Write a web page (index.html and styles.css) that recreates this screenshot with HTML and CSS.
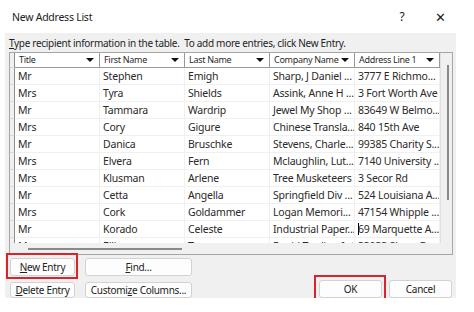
FILE: index.html
```html
<!DOCTYPE html>
<html lang="en">
<head>
    <meta charset="UTF-8">
    <title>New Address List</title>
    <link rel="stylesheet" href="styles.css">
</head>
<body>
    <div class="titlebar">
        <span class="title">New Address List</span>
        <span class="help">?</span>
        <span class="close">&#x2715;</span>
    </div>
    <div class="dialog">
        <div class="hint"><u>T</u>ype recipient information in the table.&nbsp; To add more entries, click New Entry.</div>
        <div class="grid">
            <div class="grid-main">
                <div class="cells">
                    <div class="row head">
                        <div class="rh"></div>
                        <div class="hc">Title<i></i></div>
                        <div class="hc">First Name<i></i></div>
                        <div class="hc">Last Name<i></i></div>
                        <div class="hc">Company Name<i></i></div>
                        <div class="hc">Address Line 1<i></i></div>
                    </div>
                    <div class="row"><div class="rh"></div><div class="c">Mr</div><div class="c">Stephen</div><div class="c">Emigh</div><div class="c">Sharp, J Daniel ...</div><div class="c">3777 E Richmo...</div></div>
                    <div class="row"><div class="rh"></div><div class="c">Mrs</div><div class="c">Tyra</div><div class="c">Shields</div><div class="c">Assink, Anne H ...</div><div class="c">3 Fort Worth Ave</div></div>
                    <div class="row"><div class="rh"></div><div class="c">Mr</div><div class="c">Tammara</div><div class="c">Wardrip</div><div class="c">Jewel My Shop ...</div><div class="c">83649 W Belmo...</div></div>
                    <div class="row"><div class="rh"></div><div class="c">Mrs</div><div class="c">Cory</div><div class="c">Gigure</div><div class="c">Chinese Transla...</div><div class="c">840 15th Ave</div></div>
                    <div class="row"><div class="rh"></div><div class="c">Mr</div><div class="c">Danica</div><div class="c">Bruschke</div><div class="c">Stevens, Charle...</div><div class="c">99385 Charity S...</div></div>
                    <div class="row"><div class="rh"></div><div class="c">Mrs</div><div class="c">Elvera</div><div class="c">Fern</div><div class="c">Mclaughlin, Lut...</div><div class="c">7140 University ...</div></div>
                    <div class="row"><div class="rh"></div><div class="c">Mrs</div><div class="c">Klusman</div><div class="c">Arlene</div><div class="c">Tree Musketeers</div><div class="c">3 Secor Rd</div></div>
                    <div class="row"><div class="rh"></div><div class="c">Mr</div><div class="c">Cetta</div><div class="c">Angella</div><div class="c">Springfield Div ...</div><div class="c">524 Louisiana A...</div></div>
                    <div class="row"><div class="rh"></div><div class="c">Mrs</div><div class="c">Cork</div><div class="c">Goldammer</div><div class="c">Logan Memori...</div><div class="c">47154 Whipple ...</div></div>
                    <div class="row"><div class="rh"></div><div class="c">Mr</div><div class="c">Korado</div><div class="c">Celeste</div><div class="c">Industrial Paper...</div><div class="c"><span class="caret"></span>69 Marquette A...</div></div>
                    <div class="row"><div class="rh"></div><div class="c">Ms</div><div class="c">Ellis</div><div class="c">Tenney</div><div class="c">Rapid Trading Int...</div><div class="c">33033 Shore Dr...</div></div>
                </div>
                <div class="vscroll"><div class="vthumb"></div></div>
            </div>
            <div class="hscroll"><div class="hthumb"></div></div>
        </div>
        <div class="actions">
            <div class="left-buttons">
                <div class="mark mark-new"><button><u>N</u>ew Entry</button></div>
                <button><u>F</u>ind...</button>
                <button><u>D</u>elete Entry</button>
                <button>Customi<u>z</u>e Columns...</button>
            </div>
            <div class="right-buttons">
                <div class="mark mark-ok"><button>OK</button></div>
                <button>Cancel</button>
            </div>
        </div>
    </div>
</body>
</html>
```

FILE: styles.css
```css
body {
    margin: 0;
    background-color: #fff;
    font-family: "Noto Sans", "Open Sans", sans-serif;
    color: #222;
}
.titlebar {
    display: flex;
    align-items: center;
    height: 33px;
    padding-left: 12px;
    font-size: 10.5px;
    letter-spacing: -0.25px;
}
.title {
    flex: 1;
}
.help {
    width: 20px;
    text-align: center;
    font-size: 12px;
}
.close {
    width: 20px;
    margin: 0 24px 0 18px;
    text-align: center;
    font-size: 13px;
}
.dialog {
    width: 443px;
    margin-left: 5px;
    padding: 4px 4px 0 4px;
    background-color: #f0f0f0;
}
.hint {
    height: 15px;
    font-size: 10px;
    line-height: 13px;
    letter-spacing: -0.3px;
    color: #1e1e1e;
}
.grid {
    width: 442px;
    border: 1px solid #a5a5a5;
    background-color: #f0f0f0;
}
.grid-main {
    display: flex;
    height: 190px;
}
.cells {
    width: 430px;
    overflow: hidden;
    background-color: #fff;
}
.row {
    display: grid;
    grid-template-columns: 5px repeat(5, 85px);
    height: 17px;
    font-size: 10.5px;
    line-height: 17px;
    letter-spacing: -0.2px;
    color: #2a2a2a;
}
.rh {
    background-color: #f0f0f0;
    border-right: 1px solid #8c8c8c;
    border-bottom: 1px solid #d8d8d8;
}
.c {
    padding-left: 3px;
    white-space: nowrap;
    overflow: hidden;
    border-right: 1px solid #f0f0f0;
    border-bottom: 1px solid #f0f0f0;
}
.head {
    height: 15px;
    line-height: 14px;
    font-size: 9px;
    letter-spacing: -0.3px;
}
.hc {
    position: relative;
    padding-left: 4px;
    white-space: nowrap;
    background-color: #fff;
    border-right: 1px solid #9a9a9a;
    border-bottom: 1px solid #9a9a9a;
}
.hc i {
    position: absolute;
    right: 5px;
    top: 5px;
    border-left: 4px solid transparent;
    border-right: 4px solid transparent;
    border-top: 4px solid #111;
}
.caret {
    display: inline-block;
    width: 1px;
    height: 12px;
    margin-right: -1px;
    vertical-align: -2px;
    background-color: #000;
}
.vscroll {
    flex: 1;
    border-left: 1px solid #e0e0e0;
}
.vthumb {
    width: 2px;
    height: 135px;
    margin: 12px 0 0 6px;
    background-color: #8a8a8a;
}
.hscroll {
    height: 11px;
    padding-top: 5px;
    box-sizing: border-box;
}
.hthumb {
    width: 154px;
    height: 2px;
    margin-left: 18px;
    background-color: #8a8a8a;
}
.actions {
    display: flex;
    justify-content: space-between;
    align-items: flex-end;
    padding-top: 3px;
}
.left-buttons {
    display: grid;
    grid-template-columns: 65px 107px;
    grid-template-rows: 18px 16px;
    gap: 6px 10px;
    margin-left: 1px;
}
.right-buttons {
    display: flex;
    gap: 7px;
}
button {
    padding: 0;
    font-family: inherit;
    font-size: 10px;
    letter-spacing: -0.3px;
    color: #222;
    background-color: #fdfdfd;
    border: 1px solid #d2d2d2;
    border-radius: 3px;
}
.right-buttons button {
    width: 63px;
    height: 18px;
}
.mark {
    display: flex;
    border: 2px solid #d9242c;
}
.mark button {
    flex: 1;
}
.mark-new {
    margin: -5px -3px -3px -4px;
    padding: 3px 1px 1px 2px;
}
.mark-ok {
    margin: -5px -4px -3px -5px;
    padding: 3px 2px 1px 3px;
}
```
